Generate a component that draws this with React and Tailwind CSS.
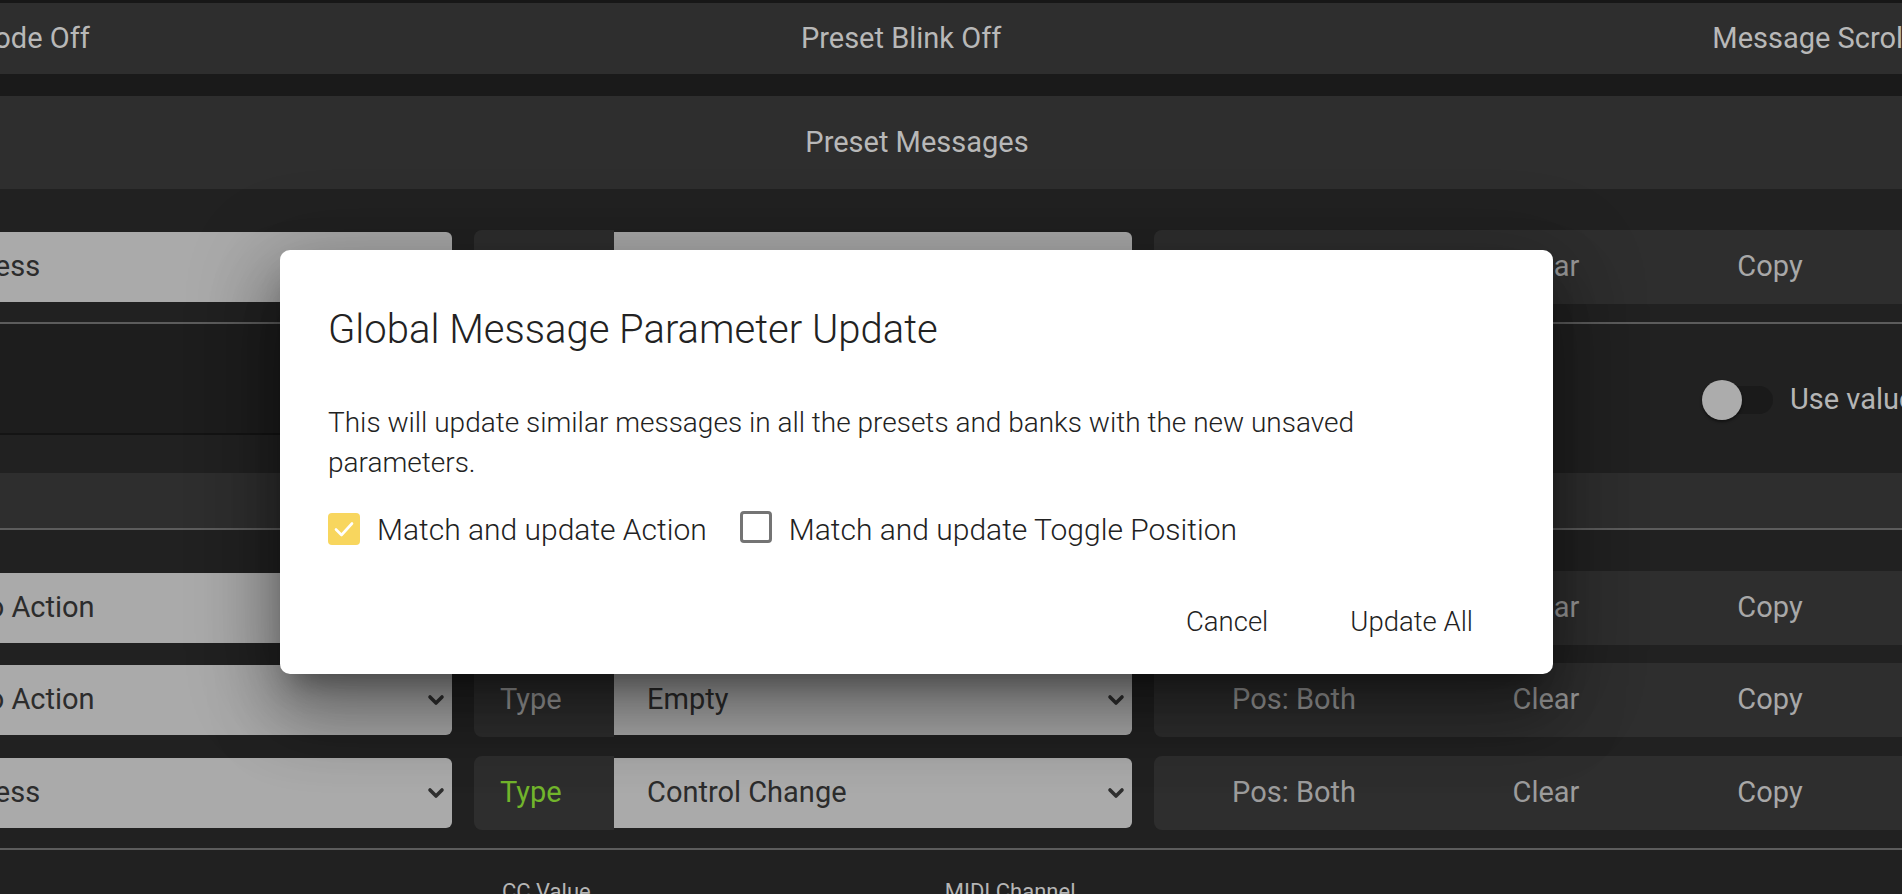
import { useState } from 'react';

// Chevron of the native selects
function Chevron() {
  return (
    <svg width="18" height="12" viewBox="0 0 18 12" className="shrink-0">
      <polyline points="3,3 9,9 15,3" fill="none" stroke="#2f2f2f" strokeWidth="3.6" strokeLinecap="round" strokeLinejoin="round" />
    </svg>
  );
}

function Selecao({ texto, className = '' }) {
  return (
    <div className={`flex h-[70px] shrink-0 items-center justify-between bg-[#aaaaaa] pl-[33px] pr-[7px] text-[#2c2c2c] ${className}`}>
      <span className="whitespace-nowrap">{texto}</span>
      <Chevron />
    </div>
  );
}

function LinhaMensagem({ acao, tipo, corTipo = 'text-[#9a9a9a]', valor, className = '' }) {
  return (
    <div className={`flex h-[74px] items-center ${className}`}>
      <Selecao texto={acao} className="-ml-[66px] w-[518px] rounded-md" />
      <div className={`ml-[22px] flex h-full w-[140px] shrink-0 items-center rounded-l-lg bg-[#2e2e2e] pl-[26px] ${corTipo}`}>
        {tipo}
      </div>
      <Selecao texto={valor} className="w-[518px] rounded-r-md" />
      <div className="ml-[22px] flex h-full w-[900px] shrink-0 items-center rounded-lg bg-[#2e2e2e]">
        <span className="w-[280px] text-center text-[#9c9c9c]">Pos: Both</span>
        <span className="w-[224px] text-center text-[#9c9c9c]">Clear</span>
        <span className="w-[224px] text-center text-[#a8a8a8]">Copy</span>
      </div>
    </div>
  );
}

function Linha({ className = '' }) {
  return <div className={`h-[2px] bg-[#5c5c5c] ${className}`} />;
}

function Interruptor() {
  return (
    <div className="relative h-[40px] w-[71px] shrink-0">
      <div className="absolute left-[18px] top-[6px] h-[28px] w-[53px] rounded-full bg-[#1a1a1a]" />
      <div className="absolute left-0 top-0 size-[40px] rounded-full bg-[#acacac] shadow-[0_2px_3px_rgba(0,0,0,0.45)]" />
    </div>
  );
}

function Caixa({ marcada, onClick }) {
  if (marcada) {
    return (
      <button onClick={onClick} className="flex size-[32px] shrink-0 items-center justify-center rounded-[4px] bg-[#f8d65e]">
        <svg width="32" height="32" viewBox="0 0 32 32">
          <polyline points="8,16.5 13.5,22 24,10.5" fill="none" stroke="white" strokeWidth="2.6" strokeLinecap="round" strokeLinejoin="round" />
        </svg>
      </button>
    );
  }
  return <button onClick={onClick} className="size-[32px] shrink-0 rounded-[4px] border-[3px] border-[#747474] bg-white" />;
}

function DialogoAtualizacao() {
  const [acao, setAcao] = useState(true);
  const [posicao, setPosicao] = useState(false);

  return (
    <div className="absolute left-[280px] top-[250px] w-[1273px] rounded-[10px] bg-white px-[48px] pb-[24px] pt-[48px] font-light text-[#222222] shadow-[0_20px_27px_-13px_rgba(0,0,0,0.35),0_43px_68px_5px_rgba(0,0,0,0.25),0_16px_83px_14px_rgba(0,0,0,0.22)]">
      <h2 className="text-[40px] leading-[64px]">Global Message Parameter Update</h2>
      <p className="mt-[41px] max-w-[1100px] text-[28px] leading-[40px]">
        This will update similar messages in all the presets and banks with the new unsaved parameters.
      </p>
      <div className="mt-[22px] flex h-[48px] items-center text-[30px]">
        <Caixa marcada={acao} onClick={() => setAcao(!acao)} />
        <span className="ml-[17px]">Match and update Action</span>
        <div className="ml-[33px]">
          <Caixa marcada={posicao} onClick={() => setPosicao(!posicao)} />
        </div>
        <span className="ml-[17px]">Match and update Toggle Position</span>
      </div>
      <div className="mt-[41px] flex h-[56px] items-center justify-end gap-[18px] text-[27.5px]">
        <button className="h-full rounded px-[32px] leading-[40px]">Cancel</button>
        <button className="h-full rounded px-[32px] leading-[40px]">Update All</button>
      </div>
    </div>
  );
}

export default function App() {
  return (
    <div className="relative h-[894px] w-full overflow-hidden bg-[#212121] font-[Roboto,sans-serif] text-[29px]">
      <div className="h-[3px] bg-[#171717]" />
      <div className="flex h-[71px] items-center whitespace-nowrap bg-[#2e2e2e] text-[#b8b8b8]">
        <span className="-ml-[31px] shrink-0">Mode Off</span>
        <span className="ml-[711px] shrink-0">Preset Blink Off</span>
        <span className="ml-[711px] shrink-0">Message Scroll Off</span>
      </div>
      <div className="h-[22px] bg-[#1a1a1a]" />
      <div className="flex h-[93px] items-center justify-center bg-[#2e2e2e] pr-[68px] text-[#b8b8b8]">
        Preset Messages
      </div>

      <LinhaMensagem acao="Press" tipo="Type" valor="Control Change" className="mt-[41px]" />
      <Linha className="mt-[18px]" />

      <div className="flex h-[111px] items-start">
        <div className="-ml-[66px] h-full w-[518px] shrink-0 border-b-2 border-[#141414] bg-[#1d1d1d]" />
        <div className="ml-[1250px] mt-[54px] flex shrink-0 items-center">
          <Interruptor />
          <span className="ml-[17px] whitespace-nowrap text-[#b5b5b5]">Use values from preset</span>
        </div>
      </div>

      <div className="mt-[38px] h-[57px] border-b-2 border-[#5c5c5c] bg-[#2e2e2e]" />

      <LinhaMensagem acao="No Action" tipo="Type" valor="Empty" className="mt-[41px]" />
      <LinhaMensagem acao="No Action" tipo="Type" valor="Empty" className="mt-[18px]" />
      <LinhaMensagem acao="Press" tipo="Type" corTipo="text-[#72b52c]" valor="Control Change" className="mt-[19px]" />
      <Linha className="mt-[18px]" />

      <div className="mt-[25px] flex whitespace-nowrap text-[22px] leading-[33px] text-[#b5b5b5]">
        <span className="ml-[502px]">CC Value</span>
        <span className="ml-[354px]">MIDI Channel</span>
      </div>

      <DialogoAtualizacao />
    </div>
  );
}
